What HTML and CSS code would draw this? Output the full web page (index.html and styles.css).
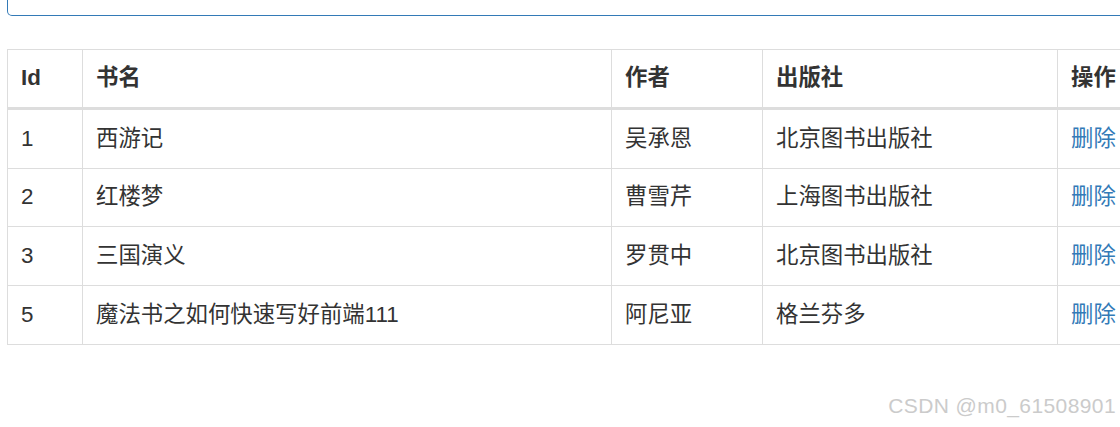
FILE: index.html
```html
<!DOCTYPE html>
<html lang="zh-CN">
<head>
<meta charset="utf-8">
<title>图书列表</title>
<link rel="stylesheet" href="styles.css">
</head>
<body>
<div class="page">
  <div class="panel"></div>
  <table class="books">
    <colgroup>
      <col class="c-id">
      <col class="c-name">
      <col class="c-author">
      <col class="c-pub">
      <col class="c-op">
    </colgroup>
    <thead>
      <tr><th>Id</th><th>书名</th><th>作者</th><th>出版社</th><th>操作</th></tr>
    </thead>
    <tbody>
      <tr><td>1</td><td>西游记</td><td>吴承恩</td><td>北京图书出版社</td><td><a href="#">删除</a></td></tr>
      <tr><td>2</td><td>红楼梦</td><td>曹雪芹</td><td>上海图书出版社</td><td><a href="#">删除</a></td></tr>
      <tr><td>3</td><td>三国演义</td><td>罗贯中</td><td>北京图书出版社</td><td><a href="#">删除</a></td></tr>
      <tr><td>5</td><td>魔法书之如何快速写好前端111</td><td>阿尼亚</td><td>格兰芬多</td><td><a href="#">删除</a></td></tr>
    </tbody>
  </table>
</div>
<div class="watermark">CSDN @m0_61508901</div>
</body>
</html>
```

FILE: styles.css
```css
html, body {
  margin: 0;
  padding: 0;
  overflow: hidden;
  background: #fff;
}
body {
  font-family: "Liberation Sans", Arial, "Noto Sans CJK SC", sans-serif;
  color: #333;
  font-size: 22.4px;
  line-height: 32px;
  width: 1120px;
  height: 427px;
  position: relative;
}
.page {
  padding-left: 7px;
  width: 1200px;
}
.panel {
  height: 15px;
  border: 1px solid #337ab7;
  border-top: none;
  border-radius: 0 0 5px 5px;
  margin-bottom: 33px;
}
.books {
  border-collapse: collapse;
  table-layout: fixed;
  width: 1190px;
}
.c-id { width: 75px; }
.c-name { width: 529px; }
.c-author { width: 151px; }
.c-pub { width: 295px; }
.c-op { width: 140px; }
.books th,
.books td {
  border: 1px solid #ddd;
  padding: 12.9px 13px;
  text-align: left;
  vertical-align: top;
  white-space: nowrap;
}
.books th {
  font-weight: bold;
  border-bottom: 3px solid #ddd;
  padding-top: 12.4px;
  padding-bottom: 12.4px;
}
.books a {
  color: #337ab7;
  text-decoration: none;
}
.watermark {
  position: absolute;
  right: 4px;
  top: 394px;
  font-family: "Liberation Sans", Arial, sans-serif;
  font-size: 21px;
  line-height: 24px;
  letter-spacing: 0.4px;
  color: #cbcbcb;
  text-shadow: 0 0 1px #fff;
}
```
